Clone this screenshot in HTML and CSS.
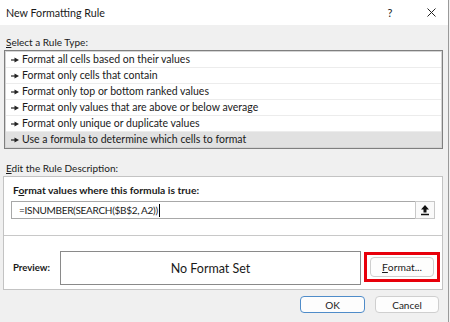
FILE: index.html
```html
<!DOCTYPE html>
<html>
<head>
<meta charset="utf-8">
<link rel="stylesheet" href="styles.css">
</head>
<body>
<div class="window">
  <div class="titlebar">
    <span class="title">New Formatting Rule</span>
    <span class="help">?</span>
    <span class="close">
      <svg width="9" height="9" viewBox="0 0 9 9"><path d="M0.5 0.5L8.5 8.5M8.5 0.5L0.5 8.5" stroke="#222" stroke-width="1" fill="none"/></svg>
    </span>
  </div>
  <div class="content">
    <div class="label"><u>S</u>elect a Rule Type:</div>
    <div class="listbox">
      <div class="row"><svg class="arr" width="8" height="6" viewBox="0 0 8 6"><path d="M0 3H4" stroke="#222" stroke-width="1.2"/><path d="M3.5 0.5L8 3L3.5 5.5Z" fill="#222"/></svg>Format all cells based on their values</div>
      <div class="row"><svg class="arr" width="8" height="6" viewBox="0 0 8 6"><path d="M0 3H4" stroke="#222" stroke-width="1.2"/><path d="M3.5 0.5L8 3L3.5 5.5Z" fill="#222"/></svg>Format only cells that contain</div>
      <div class="row"><svg class="arr" width="8" height="6" viewBox="0 0 8 6"><path d="M0 3H4" stroke="#222" stroke-width="1.2"/><path d="M3.5 0.5L8 3L3.5 5.5Z" fill="#222"/></svg>Format only top or bottom ranked values</div>
      <div class="row"><svg class="arr" width="8" height="6" viewBox="0 0 8 6"><path d="M0 3H4" stroke="#222" stroke-width="1.2"/><path d="M3.5 0.5L8 3L3.5 5.5Z" fill="#222"/></svg>Format only values that are above or below average</div>
      <div class="row"><svg class="arr" width="8" height="6" viewBox="0 0 8 6"><path d="M0 3H4" stroke="#222" stroke-width="1.2"/><path d="M3.5 0.5L8 3L3.5 5.5Z" fill="#222"/></svg>Format only unique or duplicate values</div>
      <div class="row selected"><svg class="arr" width="8" height="6" viewBox="0 0 8 6"><path d="M0 3H4" stroke="#222" stroke-width="1.2"/><path d="M3.5 0.5L8 3L3.5 5.5Z" fill="#222"/></svg>Use a formula to determine which cells to format</div>
    </div>
    <div class="label label2"><u>E</u>dit the Rule Description:</div>
    <div class="panel">
      <div class="top">
        <div class="bold blabel">F<u>o</u>rmat values where this formula is true:</div>
        <div class="input">
          <span class="formula">=ISNUMBER(SEARCH($B$2, A2))</span><span class="caret"></span>
          <span class="refbtn">
            <svg width="10" height="12" viewBox="0 0 10 12"><path d="M5 1L1 5.5H3.5V8.5H6.5V5.5H9Z" fill="#111"/><path d="M1 10.5H9" stroke="#111" stroke-width="1.5"/></svg>
          </span>
        </div>
      </div>
      <div class="bottom">
        <div class="bold plabel">Preview:</div>
        <div class="preview">No Format Set</div>
        <div class="redbox"><div class="btn fmt"><u>F</u>ormat...</div></div>
      </div>
    </div>
    <div class="actions">
      <div class="btn ok">OK</div>
      <div class="btn cancel">Cancel</div>
    </div>
  </div>
</div>
</body>
</html>
```
FILE: styles.css
```css
html, body {
  margin: 0;
  padding: 0;
}
body {
  width: 450px;
  height: 322px;
  overflow: hidden;
  font-family: Lato, "Noto Sans", sans-serif;
  font-size: 10.5px;
  color: #1a1a1a;
  background: #f0f0f0;
}
.window {
  width: 449px;
  height: 322px;
  box-sizing: border-box;
  border-right: 1px solid #9a9a9a;
  background: #f0f0f0;
  display: flex;
  flex-direction: column;
}
.titlebar {
  height: 25px;
  background: #fff;
  display: flex;
  align-items: center;
  padding-left: 6px;
  font-size: 10.7px;
  flex: none;
}
.title { flex: 1; }
.help {
  width: 10px;
  margin-right: 32px;
  font-size: 11px;
  text-align: center;
}
.close {
  width: 9px;
  margin-right: 12px;
  display: flex;
}
.content {
  padding: 0 5px 0 3px;
  display: flex;
  flex-direction: column;
}
.label {
  padding: 9px 0 0 3px;
  height: 16px;
  line-height: 16px;
  font-size: 10px;
}
.listbox {
  margin-left: 1px;
  border: 1px solid #7f7f7f;
  box-shadow: inset 0 0 0 1px #d4d4d4;
  background: #fff;
  padding: 1px;
  height: 95px;
}
.row {
  height: 15px;
  line-height: 15px;
  border-bottom: 1px solid #ececec;
  display: flex;
  align-items: center;
  padding-left: 5px;
}
.row.selected {
  background: #e1e1e1;
  border-bottom: none;
  height: 15px;
}
.arr {
  margin-right: 3px;
  flex: none;
}
.label2 {
  padding-top: 11px;
}
.panel {
  background: #fff;
  border: 1px solid #c3c3c3;
  height: 112px;
  display: flex;
  flex-direction: column;
}
.top {
  box-sizing: border-box;
  padding: 6px 7px 0 7px;
  height: 59px;
  border-bottom: 1px solid #c8c8c8;
  flex: none;
}
.bold {
  font-weight: bold;
  line-height: 14px;
}
.blabel {
  padding-left: 2px;
  font-size: 10.3px;
}
.input {
  box-sizing: border-box;
  margin-top: 4px;
  height: 18px;
  border: 1px solid #a8a8a8;
  display: flex;
  align-items: center;
  padding-left: 7px;
  position: relative;
}
.formula {
  line-height: 16px;
  font-size: 10px;
  letter-spacing: -0.3px;
}
.caret {
  width: 1px;
  height: 13px;
  background: #000;
  margin-left: 1px;
}
.refbtn {
  position: absolute;
  right: -1px;
  top: -1px;
  width: 18px;
  height: 16px;
  border: 1px solid #c8c8c8;
  background: #fafafa;
  display: flex;
  align-items: center;
  justify-content: center;
}
.bottom {
  flex: 1;
  display: flex;
  align-items: flex-start;
  padding: 15px 0 0 9px;
}
.plabel {
  width: 47px;
  line-height: 34px;
  font-size: 9.6px;
}
.preview {
  box-sizing: border-box;
  width: 301px;
  height: 34px;
  border: 1px solid #8a8a8a;
  display: flex;
  align-items: center;
  justify-content: center;
  font-size: 12.5px;
}
.redbox {
  margin: 1px 0 0 3px;
  border: 3px solid #e8000b;
  padding: 2px 3px;
}
.btn {
  box-sizing: border-box;
  height: 20px;
  border: 1px solid #cfcfcf;
  border-radius: 4px;
  background: #fdfdfd;
  display: flex;
  align-items: center;
  justify-content: center;
  font-size: 10.3px;
}
.fmt { width: 64px; }
.actions {
  display: flex;
  justify-content: flex-end;
  gap: 10px;
  padding-top: 6px;
  padding-right: 4px;
}
.ok {
  width: 65px;
  height: 17px;
  border: 1px solid #4f8cc9;
  font-size: 10px;
}
.cancel {
  width: 64px;
  height: 17px;
  font-size: 10px;
}
```
